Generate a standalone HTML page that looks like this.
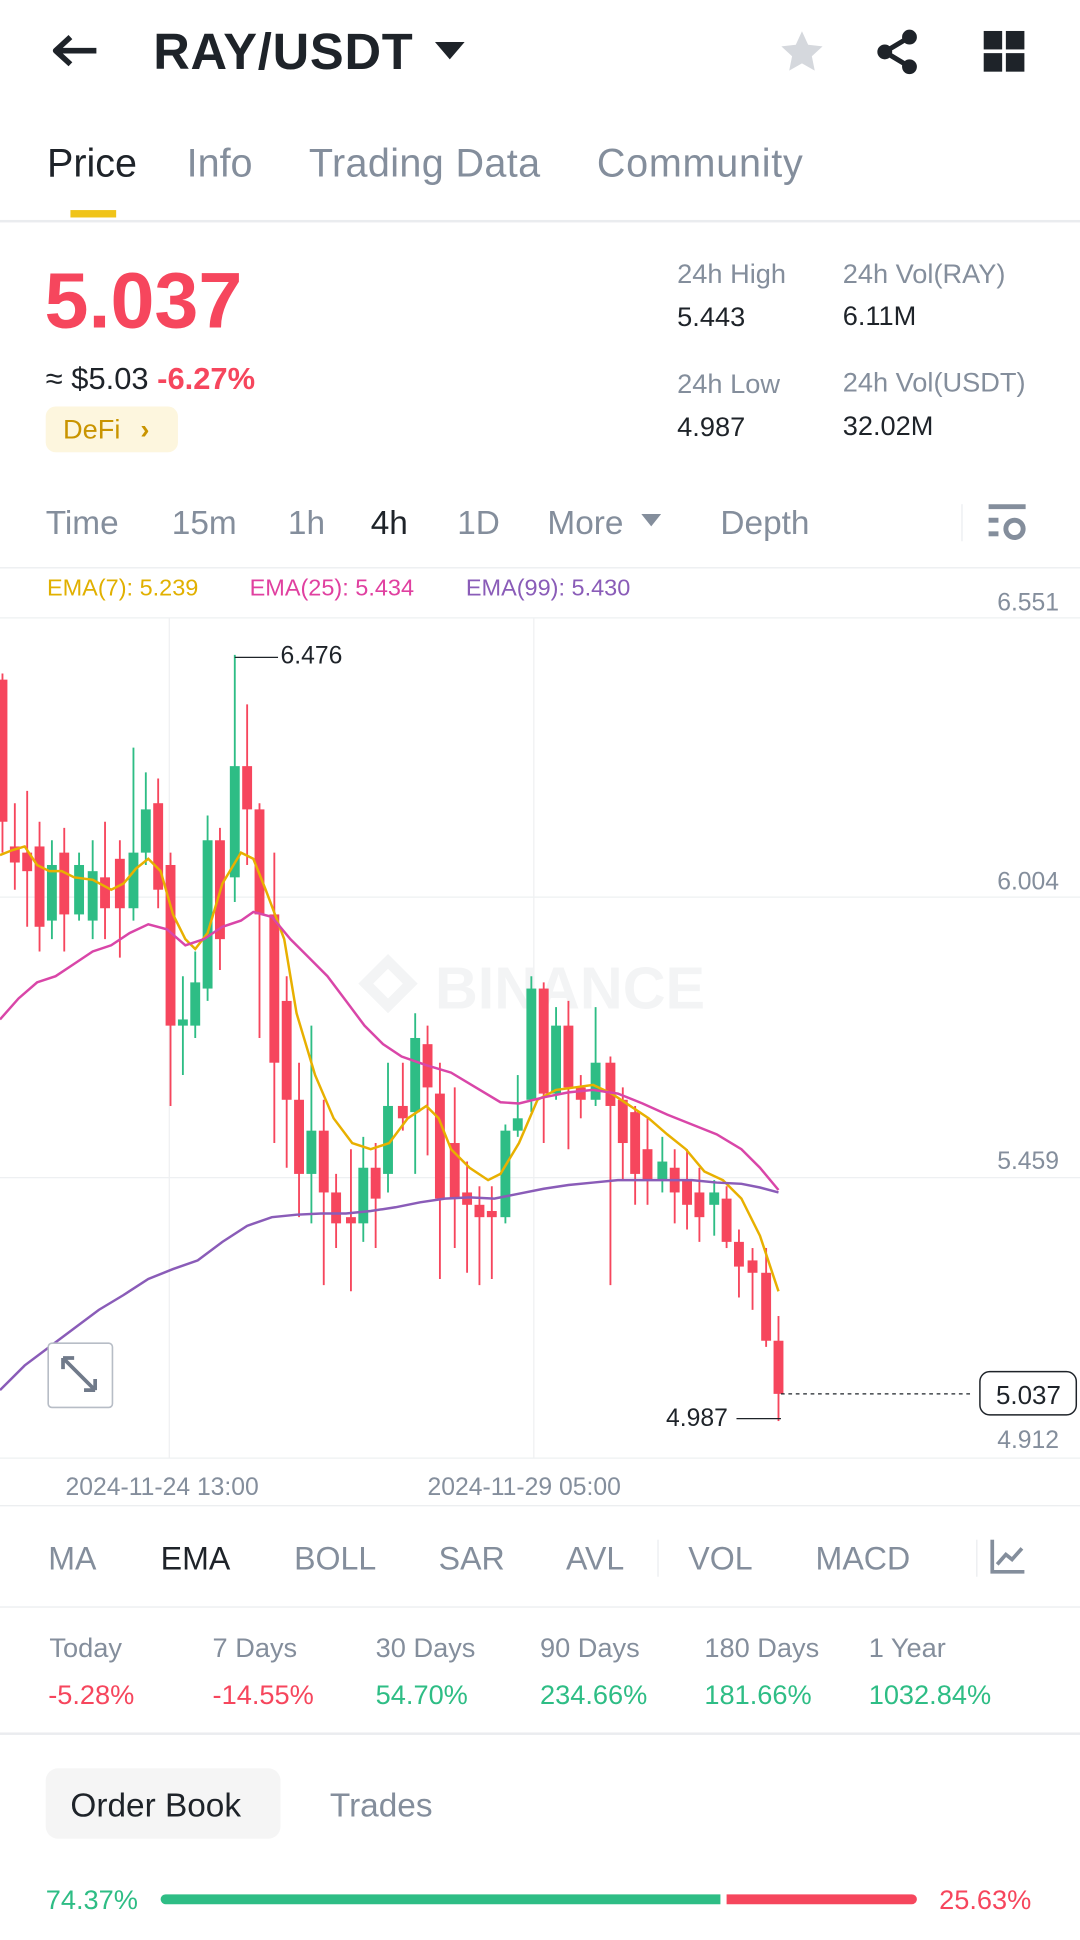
<!DOCTYPE html>
<html><head><meta charset="utf-8"><style>
*{margin:0;padding:0;box-sizing:border-box}
body{width:1080px;height:1940px;overflow:hidden;background:#fff;font-family:"Liberation Sans",sans-serif}
#w{position:absolute;left:0;top:0;width:874px;height:1570px;transform:scale(1.23570);transform-origin:0 0}
.a{position:absolute;white-space:nowrap}
.g{color:#848e9c}.d{color:#1e2329}.r{color:#f6465d}.gr{color:#2ebd85}
.hl{position:absolute;left:0;width:874px;height:1px;background:#eaecef}
</style></head><body><div id="w">
<svg class="a" style="left:40px;top:26px" width="42" height="30" viewBox="0 0 42 30"><path d="M38 15H6M17 4L5 15l12 11" stroke="#1e2329" stroke-width="4.5" fill="none" stroke-linejoin="round"/></svg>
<div class="a d" style="left:124px;top:19px;font-size:41px;font-weight:bold;letter-spacing:0.6px">RAY/USDT</div>
<svg class="a" style="left:352px;top:32px" width="24" height="18"><path d="M0 2h24L12 16z" fill="#1e2329"/></svg>
<svg class="a" style="left:629px;top:22px" width="40" height="40" viewBox="0 0 24 24"><path d="M12 2l3 6.5 7 .8-5.2 4.8 1.4 7L12 17.6 5.8 21.1l1.4-7L2 9.3l7-.8z" fill="#d5d8dd"/></svg>
<svg class="a" style="left:707px;top:22px" width="40" height="40" viewBox="0 0 40 40"><circle cx="29" cy="8" r="6" fill="#1e2329"/><circle cx="9" cy="20" r="6" fill="#1e2329"/><circle cx="29" cy="32" r="6" fill="#1e2329"/><path d="M29 8L9 20l20 12" stroke="#1e2329" stroke-width="4" fill="none"/></svg>
<svg class="a" style="left:796px;top:25px" width="34" height="34"><rect x="0" y="0" width="15" height="15" fill="#1e2329"/><rect x="18" y="0" width="15" height="15" fill="#1e2329"/><rect x="0" y="18" width="15" height="15" fill="#1e2329"/><rect x="18" y="18" width="15" height="15" fill="#1e2329"/></svg>
<div class="a d" style="left:38px;top:114px;font-size:32px">Price</div>
<div class="a g" style="left:151px;top:114px;font-size:32px">Info</div>
<div class="a g" style="left:250px;top:114px;font-size:32px;letter-spacing:0.3px">Trading Data</div>
<div class="a g" style="left:483px;top:114px;font-size:32px;letter-spacing:0.6px">Community</div>
<div class="a" style="left:57px;top:170px;width:37px;height:6px;background:#f0c419"></div>
<div class="hl" style="top:178px;height:2px"></div>
<div class="a r" style="left:36px;top:206px;font-size:64px;font-weight:bold">5.037</div>
<div class="a d" style="left:37px;top:293px;font-size:25px">≈ $5.03 <span class="r" style="font-weight:bold">-6.27%</span></div>
<div class="a" style="left:37px;top:329px;width:107px;height:37px;background:#fdf6de;border-radius:8px;color:#c99400;font-size:22px;padding:6px 0 0 14px">DeFi <span style="margin-left:10px;font-weight:bold">›</span></div>
<div class="a g" style="left:548px;top:209px;font-size:22px">24h High</div>
<div class="a d" style="left:548px;top:244px;font-size:22px">5.443</div>
<div class="a g" style="left:682px;top:209px;font-size:22px">24h Vol(RAY)</div>
<div class="a d" style="left:682px;top:243px;font-size:22px">6.11M</div>
<div class="a g" style="left:548px;top:298px;font-size:22px">24h Low</div>
<div class="a d" style="left:548px;top:333px;font-size:22px">4.987</div>
<div class="a g" style="left:682px;top:297px;font-size:22px">24h Vol(USDT)</div>
<div class="a d" style="left:682px;top:332px;font-size:22px">32.02M</div>
<div class="a g" style="left:37px;top:408px;font-size:27px">Time</div>
<div class="a g" style="left:139px;top:408px;font-size:27px">15m</div>
<div class="a g" style="left:233px;top:408px;font-size:27px">1h</div>
<div class="a d" style="left:300px;top:408px;font-size:27px">4h</div>
<div class="a g" style="left:370px;top:408px;font-size:27px">1D</div>
<div class="a g" style="left:443px;top:408px;font-size:27px">More</div>
<svg class="a" style="left:519px;top:416px" width="16" height="12"><path d="M0 0h16L8 10z" fill="#848e9c"/></svg>
<div class="a g" style="left:583px;top:408px;font-size:27px">Depth</div>
<div class="a" style="left:778px;top:408px;width:1px;height:30px;background:#eaecef"></div>
<svg class="a" style="left:800px;top:408px" width="32" height="32"><rect x="0" y="0" width="30" height="4" fill="#848e9c"/><rect x="0" y="11" width="8" height="4" fill="#848e9c"/><rect x="0" y="22" width="8" height="4" fill="#848e9c"/><circle cx="21" cy="20" r="7" stroke="#848e9c" stroke-width="4" fill="none"/></svg>
<div class="hl" style="top:459px"></div>
<div class="a" style="left:38px;top:466px;font-size:19px;color:#e1b000">EMA(7): 5.239</div>
<div class="a" style="left:202px;top:466px;font-size:19px;color:#e040a0">EMA(25): 5.434</div>
<div class="a" style="left:377px;top:466px;font-size:19px;color:#8a5cb8">EMA(99): 5.430</div>
<svg class="a" style="left:0;top:0" width="874" height="1220">
<g stroke="#eef0f2" stroke-width="1"><path d="M0 500H874M0 726H874M0 953H874M0 1180H874M137 500V1180M432 500V1180"/></g>
<g transform="translate(290,772)" fill="#f3f4f5"><path d="M24 0L48 24 24 48 0 24zM24 12L12 24 24 36 36 24z" fill-rule="evenodd"/><text x="62" y="44" font-size="48" font-weight="bold" font-family="Liberation Sans">BINANCE</text></g>
<g id="c"></g>
<polyline fill="none" stroke="#e8b000" stroke-width="2" points="0,692 10,688 20,685 30,700 40,705 50,705 60,710 75,712 90,720 100,715 110,703 120,695 130,705 140,740 150,760 158,768 168,755 180,715 195,690 205,695 215,720 230,760 240,820 255,870 270,905 285,925 300,930 315,925 330,905 345,895 355,905 365,930 380,945 395,955 405,950 420,925 435,890 450,882 465,880 480,878 495,885 510,895 525,905 540,918 555,930 570,948 585,955 600,970 615,1000 630,1045"/>
<polyline fill="none" stroke="#d946a8" stroke-width="2" points="0,825 15,808 30,795 45,790 60,780 75,770 90,765 105,755 120,748 135,752 150,765 165,760 180,750 195,745 205,738 220,742 235,760 250,775 265,790 280,810 295,830 310,845 325,855 345,862 365,868 385,880 405,892 420,893 440,888 460,884 480,882 500,885 520,893 540,902 560,910 580,918 600,930 615,945 630,963"/>
<polyline fill="none" stroke="#8a5cb8" stroke-width="2" points="0,1125 20,1105 40,1090 60,1075 80,1060 100,1048 120,1035 140,1027 160,1020 180,1005 200,992 220,985 240,983 260,982 280,982 300,980 320,977 340,973 360,970 380,969 400,970 420,966 440,962 460,959 480,957 500,955 520,955 540,955 560,955 580,957 600,958 615,961 630,965"/>
<path d="M190 532H225M632 1148H596" stroke="#1e2329" stroke-width="1" fill="none"/>
<path d="M632 1128H788" stroke="#1e2329" stroke-width="1" stroke-dasharray="3 3"/>
<text x="227" y="537" font-size="20" fill="#1e2329" font-family="Liberation Sans">6.476</text>
<text x="539" y="1154" font-size="20" fill="#1e2329" font-family="Liberation Sans">4.987</text>
<g font-size="20" fill="#848e9c" font-family="Liberation Sans"><text x="807" y="494">6.551</text><text x="807" y="720">6.004</text><text x="807" y="946">5.459</text><text x="807" y="1172">4.912</text></g>
<rect x="793" y="1110" width="78" height="35" rx="8" fill="#fff" stroke="#1e2329" stroke-width="1.2"/>
<text x="806" y="1136" font-size="21" fill="#1e2329" font-family="Liberation Sans">5.037</text>
<rect x="39" y="1087" width="52" height="52" rx="3" fill="#fff" stroke="#b7bdc6" stroke-width="1.3"/>
<path d="M51 1099l26 26M51 1099h9M51 1099v9M77 1125h-9M77 1125v-9" stroke="#707a8a" stroke-width="3" fill="none"/>
</svg>
<div class="a g" style="left:53px;top:1193px;font-size:20px">2024-11-24 13:00</div>
<div class="a g" style="left:346px;top:1193px;font-size:20px">2024-11-29 05:00</div>
<div class="hl" style="top:1218px"></div>
<div class="a g" style="left:39px;top:1246px;font-size:26px">MA</div>
<div class="a d" style="left:130px;top:1246px;font-size:26px">EMA</div>
<div class="a g" style="left:238px;top:1246px;font-size:26px">BOLL</div>
<div class="a g" style="left:355px;top:1246px;font-size:26px">SAR</div>
<div class="a g" style="left:458px;top:1246px;font-size:26px">AVL</div>
<div class="a" style="left:532px;top:1246px;width:1px;height:30px;background:#eaecef"></div>
<div class="a g" style="left:557px;top:1246px;font-size:26px">VOL</div>
<div class="a g" style="left:660px;top:1246px;font-size:26px">MACD</div>
<div class="a" style="left:790px;top:1246px;width:1px;height:30px;background:#eaecef"></div>
<svg class="a" style="left:801px;top:1246px" width="30" height="28"><path d="M2 0V26H28M6 20l7-8 5 4 8-9" stroke="#848e9c" stroke-width="3" fill="none"/></svg>
<div class="hl" style="top:1300px"></div>
<div class="a g" style="left:40px;top:1321px;font-size:22px">Today</div><div class="a r" style="left:39px;top:1359px;font-size:22px">-5.28%</div>
<div class="a g" style="left:172px;top:1321px;font-size:22px">7 Days</div><div class="a r" style="left:172px;top:1359px;font-size:22px">-14.55%</div>
<div class="a g" style="left:304px;top:1321px;font-size:22px">30 Days</div><div class="a gr" style="left:304px;top:1359px;font-size:22px">54.70%</div>
<div class="a g" style="left:437px;top:1321px;font-size:22px">90 Days</div><div class="a gr" style="left:437px;top:1359px;font-size:22px">234.66%</div>
<div class="a g" style="left:570px;top:1321px;font-size:22px">180 Days</div><div class="a gr" style="left:570px;top:1359px;font-size:22px">181.66%</div>
<div class="a g" style="left:703px;top:1321px;font-size:22px">1 Year</div><div class="a gr" style="left:703px;top:1359px;font-size:22px">1032.84%</div>
<div class="hl" style="top:1402px;height:2px"></div>
<div class="a d" style="left:37px;top:1431px;width:190px;height:57px;background:#f5f5f5;border-radius:10px;font-size:27px;padding:15px 0 0 20px">Order Book</div>
<div class="a g" style="left:267px;top:1446px;font-size:27px">Trades</div>
<div class="a gr" style="left:37px;top:1525px;font-size:22px">74.37%</div>
<div class="a" style="left:130px;top:1533px;width:453px;height:8px;background:#2ebd85;border-radius:4px 0 0 4px"></div>
<div class="a" style="left:588px;top:1533px;width:154px;height:8px;background:#f6465d;border-radius:0 4px 4px 0"></div>
<div class="a r" style="left:760px;top:1525px;font-size:22px">25.63%</div>
</div>
<script>
var d=[[2,550,665,545,690,0],[12,685,698,650,720,0],[22,690,705,640,750,0],[32,685,750,665,770,0],[42,700,745,680,760,1],[52,690,740,670,770,0],[64,700,740,690,745,1],[75,705,745,680,760,1],[85,710,735,665,760,0],[97,695,735,680,775,0],[108,690,735,605,745,1],[118,655,690,625,700,1],[128,650,720,630,735,0],[138,700,830,690,895,0],[148,825,830,790,870,1],[158,795,830,770,840,1],[168,680,800,660,810,1],[178,680,760,670,785,0],[190,620,710,530,730,1],[200,620,655,570,700,0],[210,655,740,650,840,0],[222,740,860,690,925,0],[232,810,890,790,945,0],[242,890,950,860,985,0],[252,915,950,830,990,1],[262,915,965,890,1040,0],[272,965,990,950,1010,0],[284,985,990,930,1045,0],[294,945,990,920,1005,1],[304,945,970,925,1010,0],[314,895,950,860,965,1],[326,895,905,860,915,0],[336,840,900,820,950,1],[346,845,880,830,935,0],[356,885,970,860,1035,0],[368,925,970,880,1010,0],[378,965,975,940,1030,0],[388,975,985,960,1040,0],[398,980,985,960,1035,0],[409,915,985,910,990,1],[419,905,915,870,920,1],[430,800,890,790,900,1],[440,800,885,795,925,0],[450,830,885,815,890,1],[460,830,880,810,930,0],[470,880,890,870,905,0],[482,860,890,815,895,1],[494,860,895,855,1040,0],[504,890,925,880,955,0],[514,900,950,895,975,0],[524,930,955,905,975,0],[536,940,955,920,965,1],[546,945,965,930,990,0],[556,955,975,930,995,0],[566,965,985,945,1005,0],[578,965,975,955,1000,1],[588,970,1005,960,1010,0],[598,1005,1025,995,1050,0],[609,1020,1030,1010,1060,0],[620,1030,1085,1010,1090,0],[630,1085,1128,1065,1150,0]];
var s='';d.forEach(function(c){var col=c[5]?'#2ebd85':'#f6465d';s+='<line x1="'+c[0]+'" x2="'+c[0]+'" y1="'+c[3]+'" y2="'+c[4]+'" stroke="'+col+'" stroke-width="1.5"/><rect x="'+(c[0]-4)+'" y="'+c[1]+'" width="8" height="'+Math.max(2,c[2]-c[1])+'" fill="'+col+'"/>';});
document.getElementById('c').innerHTML=s;
</script>
</body></html>
